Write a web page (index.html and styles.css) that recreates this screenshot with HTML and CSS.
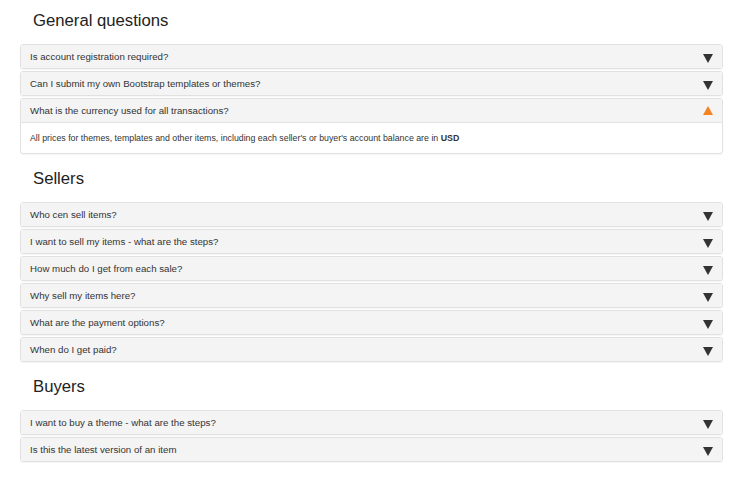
FILE: index.html
```html
<!DOCTYPE html>
<html>
<head>
<meta charset="utf-8">
<link rel="stylesheet" href="styles.css">
</head>
<body>
<div class="faq">
  <h2 class="section-title">General questions</h2>
  <div class="group">
    <div class="panel"><div class="panel-heading"><span>Is account registration required?</span><span class="arrow down"></span></div></div>
    <div class="panel"><div class="panel-heading"><span>Can I submit my own Bootstrap templates or themes?</span><span class="arrow down"></span></div></div>
    <div class="panel open"><div class="panel-heading"><span>What is the currency used for all transactions?</span><span class="arrow up"></span></div>
      <div class="panel-body">All prices for themes, templates and other items, including each seller's or buyer's account balance are in <b>USD</b></div>
    </div>
  </div>

  <h2 class="section-title">Sellers</h2>
  <div class="group">
    <div class="panel"><div class="panel-heading"><span>Who cen sell items?</span><span class="arrow down"></span></div></div>
    <div class="panel"><div class="panel-heading"><span>I want to sell my items - what are the steps?</span><span class="arrow down"></span></div></div>
    <div class="panel"><div class="panel-heading"><span>How much do I get from each sale?</span><span class="arrow down"></span></div></div>
    <div class="panel"><div class="panel-heading"><span>Why sell my items here?</span><span class="arrow down"></span></div></div>
    <div class="panel"><div class="panel-heading"><span>What are the payment options?</span><span class="arrow down"></span></div></div>
    <div class="panel"><div class="panel-heading"><span>When do I get paid?</span><span class="arrow down"></span></div></div>
  </div>

  <h2 class="section-title">Buyers</h2>
  <div class="group">
    <div class="panel"><div class="panel-heading"><span>I want to buy a theme - what are the steps?</span><span class="arrow down"></span></div></div>
    <div class="panel"><div class="panel-heading"><span>Is this the latest version of an item</span><span class="arrow down"></span></div></div>
  </div>
</div>
</body>
</html>
```
FILE: styles.css
```css
html, body {
  margin: 0;
  padding: 0;
  background: #fff;
}
body {
  font-family: "Liberation Sans", Arial, sans-serif;
  color: #333;
}
.faq {
  padding: 0 27px 0 20px;
}
.section-title {
  font-weight: normal;
  font-size: 16.7px;
  line-height: 20px;
  margin: 0;
  padding: 11px 13px 13px;
  color: #222;
}
.group {
  display: flex;
  flex-direction: column;
  gap: 2px;
  margin-bottom: 4px;
}
.panel {
  border: 1px solid #e1e1e1;
  border-radius: 3px;
  background: #fff;
  box-shadow: 0 1px 1px rgba(0,0,0,0.04);
}
.panel-heading {
  background: #f4f4f4;
  height: 23px;
  padding: 0 9px 0 9px;
  display: flex;
  align-items: center;
  justify-content: space-between;
  font-size: 9.7px;
  color: #333;
}
.panel.open .panel-heading {
  border-bottom: 1px solid #e4e4e4;
}
.panel-body {
  font-size: 8.8px;
  padding: 10px 9px 10px;
  line-height: 10px;
  color: #333;
}
.arrow {
  width: 0;
  height: 0;
  border-left: 5px solid transparent;
  border-right: 5px solid transparent;
  margin-top: 3px;
}
.arrow.down {
  border-top: 9px solid #333;
}
.arrow.up {
  border-bottom: 9px solid #f58220;
  margin-top: 0;
}
```
